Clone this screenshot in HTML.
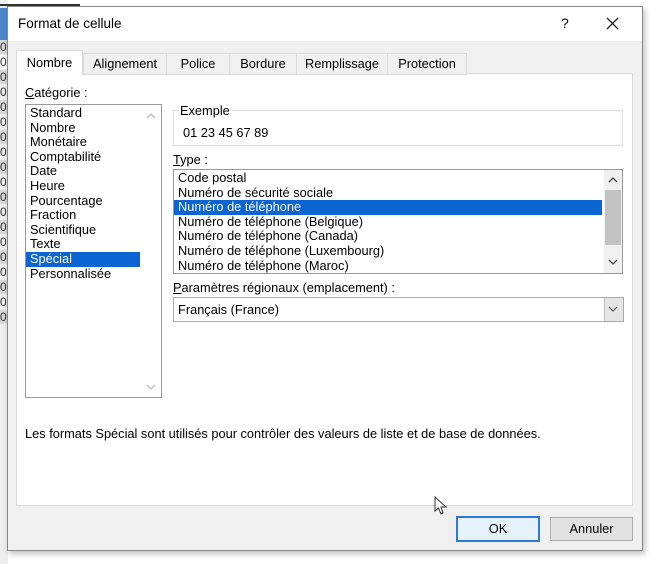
<!DOCTYPE html>
<html><head><style>
body{margin:0;width:661px;height:564px;background:#fff;position:relative;overflow:hidden;font-family:"Liberation Sans",sans-serif;font-size:12.8px;color:#000}
.a{position:absolute}
.strip div{position:absolute;left:0;width:8px;height:14px;font-size:12px;line-height:14px;overflow:hidden;color:#333}
.list div{height:14.6px;line-height:14.6px;padding-left:4px;white-space:nowrap}
.sel{background:#0a64d2;color:#fff}
.btn{position:absolute;height:22px;line-height:22px;text-align:center;background:#e1e1e1;border:1px solid #adadad}
.tab{position:absolute;top:53px;height:20px;border:1px solid #dadada;background:#f0f0f0;text-align:center;line-height:20px}
</style></head><body>
<div class="a" style="left:0;top:0;width:8px;height:564px;background:#eee"></div>
<div class="a" style="left:0;top:4px;width:80px;height:2px;background:#333"></div>
<div class="a" style="left:0;top:8px;width:8px;height:32px;background:#4a86c8"></div>
<div class="strip">
<div style="top:40px;background:#d8d8d8">00</div><div style="top:55px;background:#fff">00</div><div style="top:70px;background:#d8d8d8">00</div><div style="top:85px">00</div><div style="top:100px;background:#d8d8d8">00</div><div style="top:115px">00</div><div style="top:130px;background:#d8d8d8">00</div><div style="top:145px">00</div><div style="top:160px;background:#d8d8d8">00</div><div style="top:175px">00</div><div style="top:190px;background:#d8d8d8">00</div><div style="top:205px">00</div><div style="top:220px;background:#d8d8d8">00</div><div style="top:235px">00</div><div style="top:250px;background:#d8d8d8">00</div><div style="top:265px">00</div><div style="top:280px;background:#d8d8d8">00</div><div style="top:295px">00</div><div style="top:310px;background:#d8d8d8">00</div>
</div>
<div class="a" style="left:7px;top:6px;width:634px;height:543px;background:#f0f0f0;border:1px solid #888;box-shadow:2px 3px 6px rgba(0,0,0,.25)"></div>
<div class="a" style="left:8px;top:7px;width:634px;height:34px;background:#fff"></div>
<div class="a" style="left:18px;top:16px;font-size:13.5px">Format de cellule</div>
<div class="a" style="left:561px;top:15px;font-size:14px">?</div>
<svg class="a" style="left:606px;top:17px" width="13" height="13"><path d="M1 1L12 12M12 1L1 12" stroke="#222" stroke-width="1.3"/></svg>
<div class="a" style="left:16px;top:73px;width:615px;height:431px;background:#fff;border:1px solid #dadada"></div>
<div class="tab" style="left:83px;width:82px">Alignement</div>
<div class="tab" style="left:166px;width:62px">Police</div>
<div class="tab" style="left:229px;width:66px">Bordure</div>
<div class="tab" style="left:296px;width:90px">Remplissage</div>
<div class="tab" style="left:387px;width:78px">Protection</div>
<div class="a" style="left:16px;top:50px;width:65px;height:24px;border:1px solid #dadada;border-bottom:none;background:#fff;text-align:center;line-height:24px">Nombre</div>
<div class="a" style="left:25px;top:85px"><u>C</u>atégorie :</div>
<div class="a list" style="left:25px;top:104px;width:137px;height:294px;border:1px solid #999;padding-top:1px;box-sizing:border-box">
<div>Standard</div><div>Nombre</div><div>Monétaire</div><div>Comptabilité</div><div>Date</div><div>Heure</div><div>Pourcentage</div><div>Fraction</div><div>Scientifique</div><div>Texte</div><div class="sel" style="width:110px">Spécial</div><div>Personnalisée</div>
</div>
<svg class="a" style="left:146px;top:112px" width="10" height="7"><path d="M1 6L5 2L9 6" stroke="#bbb" fill="none" stroke-width="1.3"/></svg>
<svg class="a" style="left:146px;top:384px" width="10" height="7"><path d="M1 1L5 5L9 1" stroke="#bbb" fill="none" stroke-width="1.3"/></svg>
<div class="a" style="left:173px;top:110px;width:448px;height:34px;border:1px solid #dcdcdc"></div>
<div class="a" style="left:178px;top:103px;background:#fff;padding:0 2px">Exemple</div>
<div class="a" style="left:183px;top:125px">01 23 45 67 89</div>
<div class="a" style="left:173px;top:152px"><u>T</u>ype :</div>
<div class="a list" style="left:173px;top:169px;width:450px;height:105px;border:1px solid #999;box-sizing:border-box;padding-top:1px">
<div>Code postal</div><div>Numéro de sécurité sociale</div><div class="sel" style="width:424px">Numéro de téléphone</div><div>Numéro de téléphone (Belgique)</div><div>Numéro de téléphone (Canada)</div><div>Numéro de téléphone (Luxembourg)</div><div>Numéro de téléphone (Maroc)</div>
</div>
<div class="a" style="left:604px;top:170px;width:18px;height:103px;background:#f0f0f0"></div>
<div class="a" style="left:605px;top:190px;width:16px;height:55px;background:#c2c2c2"></div>
<svg class="a" style="left:608px;top:176px" width="10" height="7"><path d="M1 6L5 2L9 6" stroke="#444" fill="none" stroke-width="1.3"/></svg>
<svg class="a" style="left:608px;top:259px" width="10" height="7"><path d="M1 1L5 5L9 1" stroke="#444" fill="none" stroke-width="1.3"/></svg>
<div class="a" style="left:173px;top:280px"><u>P</u>aramètres régionaux (emplacement) :</div>
<div class="a" style="left:173px;top:297px;width:445px;height:23px;border:1px solid #aaa;line-height:23px;padding-left:4px">Français (France)</div>
<div class="a" style="left:604px;top:298px;width:18px;height:23px;background:#e5e5e5;border-left:1px solid #bbb"></div>
<svg class="a" style="left:608px;top:306px" width="10" height="7"><path d="M1 1L5 5L9 1" stroke="#555" fill="none" stroke-width="1.2"/></svg>
<div class="a" style="left:25px;top:426px">Les formats Spécial sont utilisés pour contrôler des valeurs de liste et de base de données.</div>
<svg class="a" style="left:434px;top:496px" width="14" height="20"><path d="M1 1L1 15L4.5 12L7 18L9 17L7 11L12 11Z" fill="#fff" stroke="#333" stroke-width="1"/></svg>
<div class="btn" style="left:456px;top:516px;width:80px;border:2px solid #2a7ad6;background:#e5f1fb">OK</div>
<div class="btn" style="left:550px;top:517px;width:81px">Annuler</div>
</body></html>
